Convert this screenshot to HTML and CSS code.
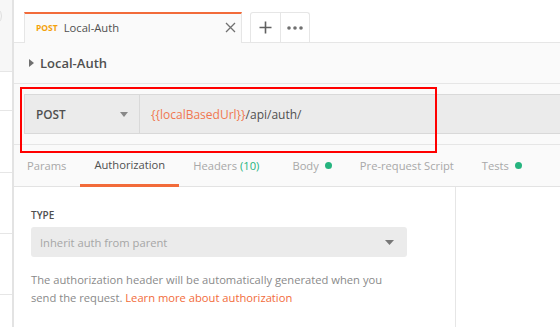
FILE: index.html
```html
<!DOCTYPE html>
<html>
<head>
<meta charset="utf-8">
<link rel="stylesheet" href="styles.css">
</head>
<body>
<div class="app">
  <aside class="sidebar">
    <div class="sb-top"><div class="sb-circle"></div></div>
    <div class="sb-row r1"></div>
    <div class="sb-row r2"></div>
    <div class="sb-row r3"></div>
    <div class="sb-row r4"></div>
  </aside>
  <main class="main">
    <div class="tabbar">
      <div class="tab">
        <span class="tab-method">POST</span>
        <span class="tab-name">Local-Auth</span>
        <svg class="tab-close" width="11" height="11" viewBox="0 0 11 11"><path d="M1 1L10 10M10 1L1 10" stroke="#707070" stroke-width="1.3"/></svg>
      </div>
      <div class="tab-actions">
        <div class="tab-btn"><svg width="13" height="13" viewBox="0 0 13 13"><path d="M6.5 0.5V12.5M0.5 6.5H12.5" stroke="#606060" stroke-width="1.6"/></svg></div>
        <div class="tab-btn"><svg width="16" height="4" viewBox="0 0 16 4"><circle cx="2" cy="2" r="1.8" fill="#707070"/><circle cx="8" cy="2" r="1.8" fill="#707070"/><circle cx="14" cy="2" r="1.8" fill="#707070"/></svg></div>
      </div>
    </div>
    <div class="crumb">
      <svg class="crumb-caret" width="5" height="8" viewBox="0 0 5 8"><path d="M0 0L5 4L0 8Z" fill="#707070"/></svg>
      <span class="crumb-name">Local-Auth</span>
    </div>
    <div class="urlwrap">
      <div class="urlbar">
        <div class="method">
          <span>POST</span>
          <svg width="8" height="5" viewBox="0 0 8 5"><path d="M0 0H8L4 5Z" fill="#888"/></svg>
        </div>
        <div class="url"><span class="var">{{localBasedUrl}}</span>/api/auth/</div>
      </div>
    </div>
    <nav class="reqtabs">
      <span class="reqtab first">Params</span>
      <span class="reqtab active">Authorization</span>
      <span class="reqtab headers">Headers <span class="count">(10)</span></span>
      <span class="reqtab">Body <i class="dot"></i></span>
      <span class="reqtab">Pre-request Script</span>
      <span class="reqtab">Tests <i class="dot"></i></span>
    </nav>
    <div class="content">
      <section class="auth">
        <div class="label">TYPE</div>
        <div class="select">
          <span>Inherit auth from parent</span>
          <svg width="9" height="5" viewBox="0 0 9 5"><path d="M0 0H9L4.5 5Z" fill="#777"/></svg>
        </div>
        <p class="help">The authorization header will be automatically generated when you send the request. <span class="link">Learn more about authorization</span></p>
      </section>
      <section class="side"></section>
    </div>
  </main>
  <div class="highlight"></div>
</div>
</body>
</html>
```

FILE: styles.css
```css
* { box-sizing: border-box; }
html, body { margin: 0; padding: 0; }
body {
  font-family: "Open Sans", "Noto Sans", sans-serif;
  font-size: 12px;
  color: #505050;
  background: #fff;
  width: 560px;
  height: 327px;
  overflow: hidden;
}
.app {
  position: relative;
  display: flex;
  height: 327px;
}
.sidebar {
  width: 14px;
  flex: none;
  overflow: hidden;
  border-right: 2px solid #e3e3e3;
  box-shadow: 1px 0 0 #f0f0f0;
  background: #fff;
}
.sb-top {
  height: 72px;
  background: #f7f7f7;
  border-bottom: 1px solid #e6e6e6;
  padding-top: 6px;
}
.sb-circle {
  width: 20px;
  height: 20px;
  margin-left: -18px;
  border: 1px solid #dedede;
  border-radius: 50%;
}
.sb-row { border-bottom: 1px solid #e6e6e6; }
.r1 { height: 39px; }
.r2 { height: 62px; }
.r3 { height: 61px; }
.r4 { height: 61px; }

.main {
  flex: 1;
  display: flex;
  flex-direction: column;
  min-width: 0;
  background: #fafafa;
}
.tabbar {
  height: 43px;
  background: #fff;
  border-bottom: 1px solid #e6e6e6;
  display: flex;
  align-items: flex-end;
  padding-left: 10px;
}
.tab {
  width: 218px;
  height: 31px;
  margin-bottom: -1px;
  background: #fafafa;
  border-top: 2px solid #f26b3a;
  border-left: 1px solid #e6e6e6;
  border-right: 1px solid #e6e6e6;
  display: flex;
  align-items: center;
  padding: 0 5px 2px 11px;
}
.tab-method {
  color: #f4a20c;
  font-size: 8.5px;
  font-weight: 700;
  margin-right: 6px;
}
.tab-name { font-size: 11.2px; color: #505050; flex: 1; }
.tab-actions {
  display: flex;
  margin-left: 8px;
  height: 30px;
  border: 1px solid #e6e6e6;
  border-bottom: none;
  border-radius: 3px 3px 0 0;
  background: #fff;
}
.tab-btn {
  width: 29px;
  display: flex;
  align-items: center;
  justify-content: center;
}
.tab-btn + .tab-btn { border-left: 1px solid #e6e6e6; }

.crumb {
  height: 41px;
  border-bottom: 1px solid #e6e6e6;
  display: flex;
  align-items: center;
  padding-left: 15px;
}
.crumb-caret { margin-right: 6px; }
.crumb-name { font-size: 13px; font-weight: 600; color: #505050; }

.urlwrap {
  padding: 10px 0 10px 10px;
  border-bottom: 1px solid #e6e6e6;
}
.urlbar {
  height: 40px;
  display: flex;
  background: #ebebeb;
  border-top: 1px solid #d9d9d9;
  border-bottom: 1px solid #d9d9d9;
  border-left: 1px solid #d9d9d9;
}
.method {
  width: 115px;
  display: flex;
  align-items: center;
  justify-content: space-between;
  padding: 0 11px 0 11px;
  border-right: 1px solid #d9d9d9;
  font-size: 11.8px;
  font-weight: 600;
  color: #505050;
}
.url {
  display: flex;
  align-items: center;
  padding-left: 11px;
  font-size: 12px;
  color: #505050;
}
.var { color: #f07850; }

.reqtabs {
  height: 42px;
  border-bottom: 1px solid #e3e3e3;
  display: flex;
  align-items: stretch;
}
.reqtab {
  display: flex;
  align-items: center;
  padding: 0 14px;
  color: #a8a8a8;
  font-size: 11.2px;
  border-bottom: 2px solid transparent;
  margin-bottom: -1px;
}
.reqtab.first { padding-left: 13px; }
.reqtab.headers { padding-right: 19px; }
.reqtab.active {
  color: #505050;
  border-bottom: 3px solid #f26b3a;
}
.count { color: #26b47f; margin-left: 3px; }
.dot {
  display: inline-block;
  width: 7px;
  height: 7px;
  border-radius: 50%;
  background: #26b47f;
  margin-left: 6px;
}

.content {
  flex: 1;
  display: flex;
  background: #fff;
}
.auth {
  width: 442px;
  border-right: 1px solid #e6e6e6;
  padding: 21px 0 0 17px;
}
.side { flex: 1; }
.label {
  font-size: 10px;
  font-weight: 600;
  color: #505050;
  line-height: 14px;
}
.select {
  margin-top: 5px;
  width: 376px;
  height: 30px;
  background: #ebebeb;
  border-radius: 3px;
  display: flex;
  align-items: center;
  justify-content: space-between;
  padding: 0 13px 0 9px;
  color: #a6a6a6;
  font-size: 11.2px;
}
.help {
  margin: 14px 0 0;
  width: 362px;
  font-size: 11.2px;
  line-height: 18px;
  color: #8a8a8a;
}
.link { color: #f26b3a; }

.highlight {
  position: absolute;
  left: 20px;
  top: 87px;
  width: 417px;
  height: 66px;
  border: 2px solid #f00;
}
```
